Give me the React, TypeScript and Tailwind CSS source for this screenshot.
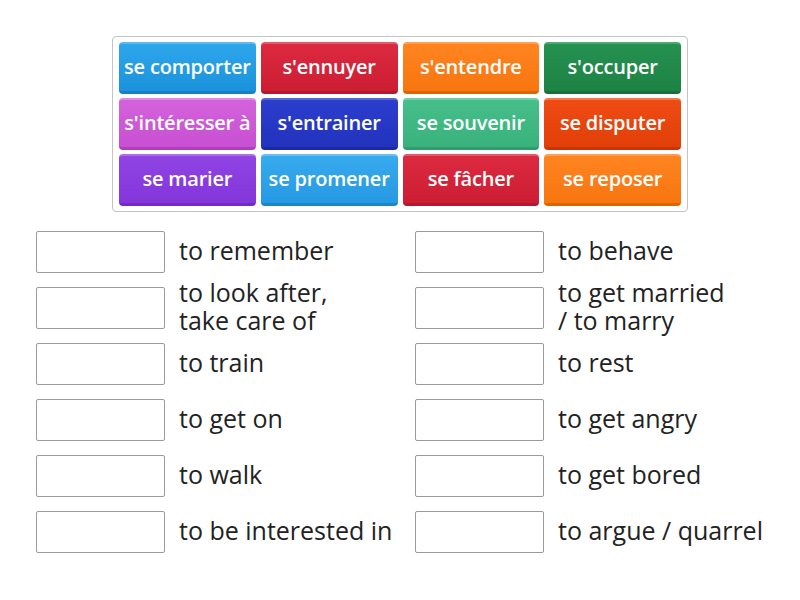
import React from 'react';

interface Tile {
  label: string;
  className: string;
}

const tiles: Tile[] = [
  { label: 'se comporter', className: 'bg-gradient-to-b from-[#2ea6ec] to-[#1a93dc] border-t-[#5cbaf0] border-b-[#1580c4]' },
  { label: "s'ennuyer", className: 'bg-gradient-to-b from-[#dc2a40] to-[#cc1d33] border-t-[#e45a6a] border-b-[#b01a2d]' },
  { label: "s'entendre", className: 'bg-gradient-to-b from-[#ff8420] to-[#f7760f] border-t-[#ffa050] border-b-[#dc6508]' },
  { label: "s'occuper", className: 'bg-gradient-to-b from-[#24914f] to-[#1d8345] border-t-[#4aaa70] border-b-[#17703a]' },
  { label: "s'intéresser à", className: 'bg-gradient-to-b from-[#d462dc] to-[#c84fd2] border-t-[#e08ae6] border-b-[#b03dba]' },
  { label: "s'entrainer", className: 'bg-gradient-to-b from-[#2b3ecc] to-[#2233bd] border-t-[#5566d8] border-b-[#1b2aa3]' },
  { label: 'se souvenir', className: 'bg-gradient-to-b from-[#46be8a] to-[#39b27e] border-t-[#70cfa5] border-b-[#2f9c6d]' },
  { label: 'se disputer', className: 'bg-gradient-to-b from-[#ee4c14] to-[#e23f08] border-t-[#f47848] border-b-[#c63504]' },
  { label: 'se marier', className: 'bg-gradient-to-b from-[#9044e4] to-[#8336da] border-t-[#aa70ec] border-b-[#712bc2]' },
  { label: 'se promener', className: 'bg-gradient-to-b from-[#38aaee] to-[#2599e2] border-t-[#66c0f2] border-b-[#1d86c8]' },
  { label: 'se fâcher', className: 'bg-gradient-to-b from-[#dc2a40] to-[#cc1d33] border-t-[#e45a6a] border-b-[#b01a2d]' },
  { label: 'se reposer', className: 'bg-gradient-to-b from-[#ff8420] to-[#f7760f] border-t-[#ffa050] border-b-[#dc6508]' },
];

const leftItems = [
  ['to remember'],
  ['to look after,', 'take care of'],
  ['to train'],
  ['to get on'],
  ['to walk'],
  ['to be interested in'],
];

const rightItems = [
  ['to behave'],
  ['to get married', '/ to marry'],
  ['to rest'],
  ['to get angry'],
  ['to get bored'],
  ['to argue / quarrel'],
];

const AnswerRow: React.FC<{ lines: string[] }> = ({ lines }) => (
  <div className="flex items-center h-[42px]">
    <div className="w-[129px] h-[42px] shrink-0 border border-[#9a9a9a] rounded-[2px] bg-white" />
    <p className="ml-[14px] -mt-[4px] text-[25px] leading-[28px] text-[#222] whitespace-nowrap">
      {lines[0]}
      {lines[1] && (
        <>
          <br />
          {lines[1]}
        </>
      )}
    </p>
  </div>
);

const App: React.FC = () => {
  return (
    <div className="w-[800px] h-[600px] bg-white font-['Open_Sans',sans-serif] pt-[36px]">
      {/* Word tiles */}
      <div className="mx-auto w-[576px] border border-[#c4c4c4] rounded-[4px] px-[6px] py-[5px] grid grid-cols-4 gap-x-[5px] gap-y-[4px]">
        {tiles.map(tile => (
          <div
            key={tile.label}
            className={`h-[52px] rounded-[4px] border-t-[2px] border-b-[3px] flex items-center justify-center text-white font-semibold text-[20px] tracking-[-0.2px] whitespace-nowrap ${tile.className}`}
          >
            <span className="-mt-[2px]">{tile.label}</span>
          </div>
        ))}
      </div>

      {/* Matching rows */}
      <div className="mt-[19px] pl-[36px] grid grid-cols-[379px_1fr]">
        <div className="flex flex-col gap-[14px]">
          {leftItems.map(lines => (
            <AnswerRow key={lines[0]} lines={lines} />
          ))}
        </div>
        <div className="flex flex-col gap-[14px]">
          {rightItems.map(lines => (
            <AnswerRow key={lines[0]} lines={lines} />
          ))}
        </div>
      </div>
    </div>
  );
};

export default App;
